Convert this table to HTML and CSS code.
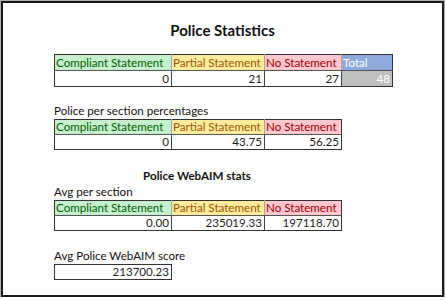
FILE: index.html
```html
<!DOCTYPE html>
<html>
<head>
<meta charset="utf-8">
<link rel="stylesheet" href="styles.css">
</head>
<body>
<div class="frame">
  <h1 class="title">Police Statistics</h1>
  <table class="grid t1">
    <colgroup><col class="c1"><col class="c2"><col class="c3"><col class="c4"></colgroup>
    <tr class="head">
      <td class="good">Compliant Statement</td>
      <td class="neutral">Partial Statement</td>
      <td class="bad">No Statement</td>
      <td class="total">Total</td>
    </tr>
    <tr class="vals">
      <td>0</td><td>21</td><td>27</td><td class="sum">48</td>
    </tr>
  </table>

  <div class="label l2">Police per section percentages</div>
  <table class="grid t2">
    <colgroup><col class="c1"><col class="c2"><col class="c3"></colgroup>
    <tr class="head">
      <td class="good">Compliant Statement</td>
      <td class="neutral">Partial Statement</td>
      <td class="bad">No Statement</td>
    </tr>
    <tr class="vals">
      <td>0</td><td>43.75</td><td>56.25</td>
    </tr>
  </table>

  <div class="subtitle">Police WebAIM stats</div>
  <div class="label">Avg per section</div>
  <table class="grid t2">
    <colgroup><col class="c1"><col class="c2"><col class="c3"></colgroup>
    <tr class="head">
      <td class="good">Compliant Statement</td>
      <td class="neutral">Partial Statement</td>
      <td class="bad">No Statement</td>
    </tr>
    <tr class="vals">
      <td>0.00</td><td>235019.33</td><td>197118.70</td>
    </tr>
  </table>

  <div class="label l4">Avg Police WebAIM score</div>
  <div class="box">213700.23</div>
</div>
</body>
</html>
```

FILE: styles.css
```css
html, body {
  margin: 0;
  padding: 0;
  background: #ffffff;
}
body {
  font-family: Lato, "Liberation Sans", sans-serif;
  font-size: 11.6px;
  color: #1e1e1e;
}
.frame {
  box-sizing: border-box;
  margin: 1px 0 0 1px;
  width: 443px;
  height: 296px;
  border: 2px solid #1a1a1a;
  box-shadow: 0 0 0 1px #b0b0b0;
  padding: 0 0 0 51px;
}
.title {
  margin: 17px 0 0 -51px;
  font-size: 15px;
  font-weight: bold;
  line-height: 20px;
  text-align: center;
  color: #111;
}
.grid {
  border-collapse: collapse;
  table-layout: fixed;
  border: 1px solid #333;
}
.grid td {
  padding: 0 2px 0 1px;
  white-space: nowrap;
  overflow: hidden;
  line-height: 14px;
  vertical-align: bottom;
}
.t1 { margin-top: 14px; }
.t1 td { height: 15px; }
.t2 td { height: 14px; }
.c1 { width: 117px; }
.c2 { width: 93px; }
.c3 { width: 77px; }
.c4 { width: 51px; }
.head td {
  border-left: 1px solid #a6a6a6;
  border-bottom: 1px solid #555;
}
.head td:first-child { border-left: none; }
.vals td {
  text-align: right;
  border-left: 1px solid #444;
}
.vals td:first-child { border-left: none; }
.good { background: #c6efce; color: #006100; }
.neutral { background: #ffeb9c; color: #9c5700; }
.bad { background: #ffc7ce; color: #9c0006; }
.total { background: #8eaadb; color: #ffffff; }
.vals .sum { background: #bfbfbf; color: #ffffff; }
.label {
  line-height: 16px;
  color: #111;
}
.l2 { margin-top: 16px; }
.subtitle {
  margin: 18px 0 0 0;
  width: 286px;
  text-align: center;
  font-weight: bold;
  line-height: 16px;
  color: #111;
}
.l4 { margin-top: 17px; }
.box {
  box-sizing: border-box;
  width: 118px;
  height: 16px;
  border: 1px solid #333;
  text-align: right;
  padding-right: 2px;
  line-height: 14px;
}
```
